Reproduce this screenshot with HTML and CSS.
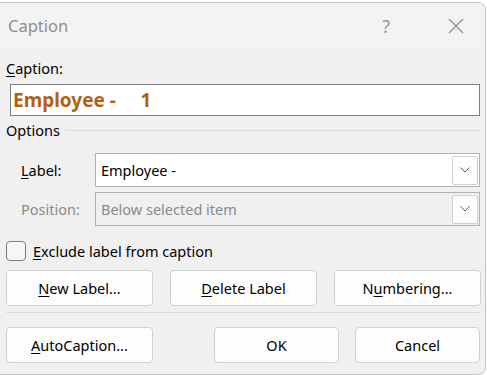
FILE: index.html
```html
<!DOCTYPE html>
<html lang="en">
<head>
    <meta charset="UTF-8">
    <title>Caption</title>
    <link rel="stylesheet" href="styles.css">
</head>
<body>
    <div class="dialog">
        <div class="titlebar">
            <span class="title">Caption</span>
            <span class="help">?</span>
            <svg class="close" width="16" height="16" viewBox="0 0 16 16">
                <path d="M1 1 L15 15 M15 1 L1 15" stroke="#8a8a8a" stroke-width="1.1" fill="none"/>
            </svg>
        </div>
        <div class="content">
            <div class="field-label"><u>C</u>aption:</div>
            <div class="caption-input">Employee -&nbsp;&nbsp;&nbsp;&nbsp; 1</div>

            <div class="group-title">
                <span>Options</span>
                <span class="group-line"></span>
            </div>

            <div class="option-row first">
                <span class="option-label"><u>L</u>abel:</span>
                <div class="combo">
                    <span class="combo-text">Employee -</span>
                    <span class="combo-btn">
                        <svg width="10" height="6" viewBox="0 0 10 6"><path d="M0.5 0.5 L5 5 L9.5 0.5" stroke="#5a5a5a" stroke-width="1" fill="none"/></svg>
                    </span>
                </div>
            </div>
            <div class="option-row disabled">
                <span class="option-label">Position:</span>
                <div class="combo">
                    <span class="combo-text">Below selected item</span>
                    <span class="combo-btn">
                        <svg width="10" height="6" viewBox="0 0 10 6"><path d="M0.5 0.5 L5 5 L9.5 0.5" stroke="#5a5a5a" stroke-width="1" fill="none"/></svg>
                    </span>
                </div>
            </div>

            <label class="check-row">
                <span class="checkbox"></span>
                <span><u>E</u>xclude label from caption</span>
            </label>

            <div class="button-row">
                <button class="btn"><u>N</u>ew Label...</button>
                <button class="btn"><u>D</u>elete Label</button>
                <button class="btn">N<u>u</u>mbering...</button>
            </div>

            <div class="separator"></div>

            <div class="button-row bottom">
                <button class="btn"><u>A</u>utoCaption...</button>
                <button class="btn small ok">OK</button>
                <button class="btn small">Cancel</button>
            </div>
        </div>
    </div>
</body>
</html>
```

FILE: styles.css
```css
/* Word-style caption dialog */
body {
    margin: 0;
    padding: 0;
    background-color: #fff;
    font-family: 'Noto Sans', 'Open Sans', sans-serif;
    font-size: 14.5px;
    color: #000;
}
.dialog {
    margin-top: 2px;
    width: 485px;
    height: 371px;
    background-color: #f0f0f0;
    border-top: 1px solid #c4c4c4;
    border-right: 1px solid #c4c4c4;
    border-bottom: 1px solid #c4c4c4;
    border-top-right-radius: 8px;
    border-bottom-right-radius: 8px;
    overflow: hidden;
}
.titlebar {
    height: 45px;
    background-color: #f3f3f3;
    display: flex;
    align-items: center;
    padding-left: 8px;
}
.title {
    font-size: 16.5px;
    color: #8f8f8f;
    flex: 1;
}
.help {
    font-size: 18px;
    color: #9a9a9a;
    margin-right: 58px;
}
.close {
    margin-right: 21px;
}
.content {
    padding: 0 5px 0 6px;
}
.field-label {
    margin-top: 10px;
    line-height: 20px;
}
u {
    text-decoration-thickness: 1px;
    text-underline-offset: 2px;
}
.caption-input {
    margin: 6px 0 0 4px;
    height: 30px;
    border: 1px solid #7d7d86;
    background-color: #fff;
    color: #b5600f;
    font-weight: bold;
    font-size: 19px;
    line-height: 30px;
    padding-left: 2px;
    white-space: pre;
}
.group-title {
    display: flex;
    align-items: center;
    margin-top: 4px;
    line-height: 20px;
}
.group-line {
    flex: 1;
    height: 1px;
    background-color: #dcdcdc;
    margin-left: 6px;
}
.option-row {
    display: flex;
    align-items: center;
    padding-left: 15px;
    margin-top: 5px;
}
.option-row.first {
    margin-top: 13px;
}
.option-label {
    width: 74px;
}
.combo {
    flex: 1;
    height: 32px;
    border: 1px solid #b2b2b2;
    background-color: #fff;
    display: flex;
    align-items: center;
    padding: 0 1px 0 5px;
}
.combo-text {
    flex: 1;
}
.combo-btn {
    width: 24px;
    height: 27px;
    border: 1px solid #cfcfcf;
    border-radius: 2px;
    background-color: #fdfdfd;
    display: flex;
    align-items: center;
    justify-content: center;
}
.disabled {
    color: #8a8a8a;
}
.disabled .combo {
    background-color: #f0f0f0;
}
.check-row {
    display: flex;
    align-items: center;
    margin-top: 14px;
    height: 21px;
}
.checkbox {
    width: 18px;
    height: 18px;
    border: 1px solid #7a7a7a;
    border-radius: 4px;
    background-color: #f6f6f6;
    margin-right: 7px;
}
.button-row {
    display: flex;
    gap: 17px;
    margin-top: 9px;
}
.button-row.bottom {
    gap: 16px;
    margin-top: 14px;
}
.btn {
    flex: 0 0 auto;
    width: 147px;
    height: 36px;
    background-color: #fdfdfd;
    border: 1px solid #d0d0d0;
    border-radius: 4px;
    font-family: inherit;
    font-size: 14.5px;
    color: #000;
    padding: 0;
}
.button-row .btn:last-child {
    margin-left: auto;
}
.btn.small {
    width: 125px;
}
.btn.ok {
    margin-left: auto;
}
.bottom .btn:last-child {
    margin-left: 0;
}
.separator {
    height: 1px;
    background-color: #dcdcdc;
    margin-top: 6px;
}
```
